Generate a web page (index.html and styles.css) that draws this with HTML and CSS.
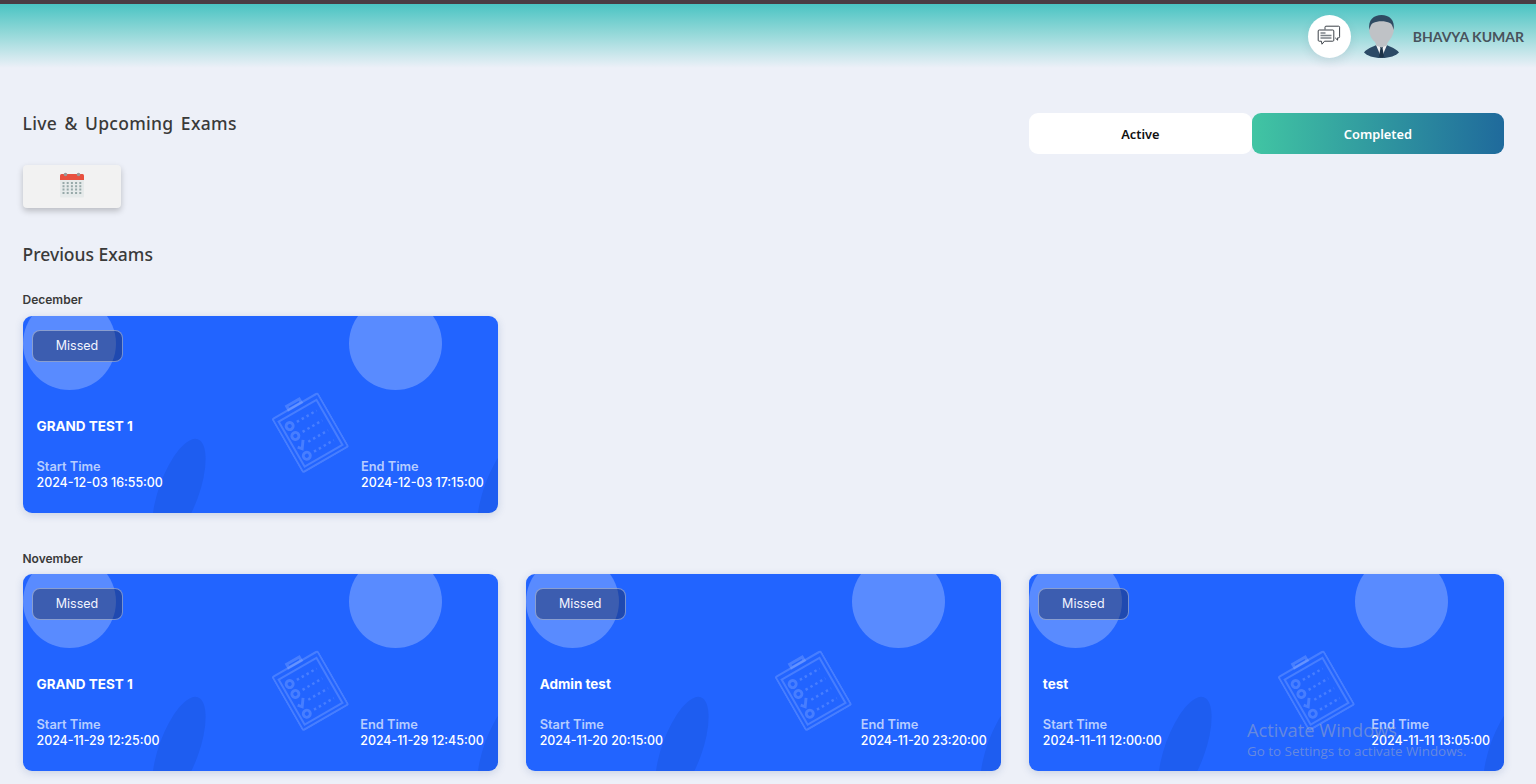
FILE: index.html
```html
<!DOCTYPE html>
<html lang="en">
<head>
<meta charset="utf-8">
<title>Exams</title>
<link rel="stylesheet" href="styles.css">
</head>
<body>
<svg class="sprite" width="0" height="0" aria-hidden="true">
  <symbol id="clipboard" viewBox="0 0 52 66">
    <g fill="none" stroke="currentColor" stroke-width="2">
      <rect x="1" y="6" width="50" height="59" rx="1.5"/>
      <rect x="5" y="11" width="42" height="50"/>
      <path d="M19 6V2h14v4z" stroke-width="2.800"/>
      <circle cx="12" cy="20" r="3.400" stroke-width="2.800"/>
      <circle cx="12" cy="31" r="3.400" stroke-width="2.800"/>
      <circle cx="12" cy="53" r="3.400" stroke-width="2.800"/>
      <path d="M8.500 41.500l3 3.500 5-7" stroke-width="2.800"/>
      <path d="M20 20h22M20 31h22M20 42h22M20 53h22" stroke-width="2.400" stroke-dasharray="2.400 3"/>
    </g>
  </symbol>
</svg>

<header class="topbar">
  <button class="chat-btn" type="button" aria-label="Messages">
    <svg width="24" height="22" viewBox="0 0 24 22" fill="none" stroke="#3b4148" stroke-width="1">
      <path d="M8 4.500V2.200q0-1 1-1h12.600q1 0 1 1v9.600q0 1-1 1h-1v2.400l-2.400-2.400"/>
      <path d="M2.200 5h13.600q1 0 1 1v9.200q0 1-1 1H7.500l-2.500 3-.6-3H2.200q-1 0-1-1V6q0-1 1-1z" fill="#fff"/>
      <path d="M3.500 8h5M3.500 10.500h11M3.500 13h11" stroke="#7d8389" stroke-width="1.300"/>
    </svg>
  </button>
  <svg class="avatar" width="37" height="43" viewBox="0 0 37 43">
    <path d="M1 37.500C4 33.500 9 32 13.500 30h10c4.500 2 9.500 3.500 12.500 7.500-3 3-9 5.500-17.500 5.500S4 40.500 1 37.500z" fill="#2c4a66"/>
    <path d="M13 30l5.500 13 5.500-13-3-2h-5z" fill="#eef0f2"/>
    <path d="M17 31h3l-.4 2.500 1.400 8-2.500 1.500-2.500-1.500 1.400-8z" fill="#1d3348"/>
    <path d="M6 13c0 7 3 11.500 5.500 13.500 1 .8 1.500 2.500 1.500 4l5.500 2 5.500-2c0-1.500.5-3.200 1.500-4C27 24.500 31 20 31 13 29 3 8 3 6 13z" fill="#bfc2c6"/>
    <path d="M6.500 15C4.500 5 11 0 18.500 0S32.500 5 30.500 15c-.5-3-1.500-6-3.500-7-5-2.200-12-2.200-17 0-2 1-3 4-3.500 7z" fill="#2f4a62"/>
  </svg>
  <span class="user-name">BHAVYA KUMAR</span>
</header>

<main class="page">
  <section class="overview">
    <h2 class="heading overview-title">Live &amp; Upcoming Exams</h2>
    <div class="tabs">
      <button class="tab tab-active" type="button">Active</button>
      <button class="tab tab-completed" type="button">Completed</button>
    </div>
  </section>

  <button class="calendar-btn" type="button" aria-label="Calendar">
    <svg width="26" height="26" viewBox="0 0 26 26">
      <rect x="1" y="2" width="24" height="23.500" rx="1.500" fill="#e6eaea"/>
      <path d="M1 8V3.500Q1 2 2.500 2h21Q25 2 25 3.500V8z" fill="#e8503f"/>
      <circle cx="6.500" cy="2.500" r="1.800" fill="#9a9a9a"/>
      <circle cx="19.500" cy="2.500" r="1.800" fill="#9a9a9a"/>
      <path d="M3.500 11h19M3.500 14.300h19M3.500 17.600h19M3.500 20.900h19" stroke="#96a8a8" stroke-width="2" stroke-dasharray="2 2.200"/>
    </svg>
  </button>

  <h2 class="heading previous-title">Previous Exams</h2>

  <h3 class="month">December</h3>
  <div class="exam-grid">
    <article class="card">
      <span class="bubble bubble-left"></span><span class="bubble bubble-right"></span>
      <span class="blob blob-left"></span><span class="blob blob-right"></span>
      <svg class="clip"><use href="#clipboard"/></svg>
      <span class="badge">Missed</span>
      <h4 class="card-title">GRAND TEST 1</h4>
      <div class="times">
        <div><p class="time-label">Start Time</p><p class="time-value">2024-12-03 16:55:00</p></div>
        <div><p class="time-label">End Time</p><p class="time-value">2024-12-03 17:15:00</p></div>
      </div>
    </article>
  </div>

  <h3 class="month month-next">November</h3>
  <div class="exam-grid">
    <article class="card">
      <span class="bubble bubble-left"></span><span class="bubble bubble-right"></span>
      <span class="blob blob-left"></span><span class="blob blob-right"></span>
      <svg class="clip"><use href="#clipboard"/></svg>
      <span class="badge">Missed</span>
      <h4 class="card-title">GRAND TEST 1</h4>
      <div class="times">
        <div><p class="time-label">Start Time</p><p class="time-value">2024-11-29 12:25:00</p></div>
        <div><p class="time-label">End Time</p><p class="time-value">2024-11-29 12:45:00</p></div>
      </div>
    </article>
    <article class="card">
      <span class="bubble bubble-left"></span><span class="bubble bubble-right"></span>
      <span class="blob blob-left"></span><span class="blob blob-right"></span>
      <svg class="clip"><use href="#clipboard"/></svg>
      <span class="badge">Missed</span>
      <h4 class="card-title">Admin test</h4>
      <div class="times">
        <div><p class="time-label">Start Time</p><p class="time-value">2024-11-20 20:15:00</p></div>
        <div><p class="time-label">End Time</p><p class="time-value">2024-11-20 23:20:00</p></div>
      </div>
    </article>
    <article class="card">
      <span class="bubble bubble-left"></span><span class="bubble bubble-right"></span>
      <span class="blob blob-left"></span><span class="blob blob-right"></span>
      <svg class="clip"><use href="#clipboard"/></svg>
      <span class="badge">Missed</span>
      <h4 class="card-title">test</h4>
      <div class="times">
        <div><p class="time-label">Start Time</p><p class="time-value">2024-11-11 12:00:00</p></div>
        <div><p class="time-label">End Time</p><p class="time-value">2024-11-11 13:05:00</p></div>
      </div>
    </article>
  </div>
</main>

<div class="watermark">
  <p class="watermark-title">Activate Windows</p>
  <p class="watermark-text">Go to Settings to activate Windows.</p>
</div>
</body>
</html>
```

FILE: styles.css
```css
* { box-sizing: border-box; }

html, body { margin: 0; padding: 0; }

body {
  position: relative;
  height: 784px;
  overflow: hidden;
  background: #edf0f8;
  font-family: "Inter", "Liberation Sans", sans-serif;
  color: #3a3a3a;
}

.sprite { position: absolute; }

p, h2, h3, h4 { margin: 0; }

button { font: inherit; border: 0; padding: 0; cursor: pointer; }

.topbar {
  display: flex;
  align-items: center;
  justify-content: flex-end;
  height: 68px;
  padding-right: 12px;
  border-top: 4px solid #4a3d44;
  background: linear-gradient(#4ac4c3 0%, #92d8d8 45%, #edf0f8 100%);
}

.chat-btn {
  display: flex;
  align-items: center;
  justify-content: center;
  width: 43px;
  height: 43px;
  border-radius: 50%;
  background: #fff;
  box-shadow: 0 4px 10px rgba(60, 90, 110, 0.12);
}

.avatar { margin-left: 12px; }

.user-name {
  margin-left: 13px;
  font-family: "Lato", sans-serif;
  font-size: 14px;
  font-weight: 700;
  color: #48535c;
}

.page { padding: 0 32px 12px 22.5px; }

.overview {
  display: grid;
  grid-template-columns: repeat(3, 1fr);
  gap: 28px;
  margin-top: 45px;
}

.heading {
  font-family: "Noto Sans", sans-serif;
  font-size: 17.500px;
  line-height: 21px;
  font-weight: 500;
  color: #3a3a3a;
}

.overview-title {
  grid-column: span 2;
  letter-spacing: 0.3px;
  word-spacing: 2.500px;
}

.tabs { display: flex; height: 41px; }

.tab {
  padding-top: 1px;
  font-family: "Noto Sans", sans-serif;
  font-size: 12.800px;
  font-weight: 600;
  border-radius: 9px;
}

.tab-active { width: 223px; background: #fff; color: #111; }

.tab-completed {
  flex: 1;
  background: linear-gradient(90deg, #41c5a3, #1f6a9c);
  color: #fff;
}

.calendar-btn {
  display: flex;
  align-items: center;
  justify-content: center;
  width: 98px;
  height: 43px;
  margin-top: 11px;
  padding-bottom: 4px;
  border-radius: 4px;
  background: #f2f2f2;
  box-shadow: 0 3px 6px rgba(0, 0, 0, 0.22);
}

.previous-title { margin-top: 36px; }

.month {
  margin-top: 27px;
  margin-bottom: 8px;
  font-family: "Inter", sans-serif;
  font-size: 12px;
  line-height: 16px;
  font-weight: 600;
  color: #3a3a3a;
}

.month-next { margin-top: 38px; margin-bottom: 7px; }

.exam-grid {
  display: grid;
  grid-template-columns: repeat(3, 1fr);
  gap: 28px;
}

.card {
  position: relative;
  display: flex;
  flex-direction: column;
  align-items: flex-start;
  height: 197px;
  padding: 14px 14px 0;
  overflow: hidden;
  border-radius: 9px;
  background: #2264ff;
  box-shadow: 0 2px 8px rgba(40, 70, 140, 0.18);
  color: #fff;
}

.bubble {
  position: absolute;
  top: -19px;
  width: 93px;
  height: 93px;
  border-radius: 50%;
  background: rgba(255, 255, 255, 0.25);
}

.bubble-left { left: 0; }
.bubble-right { left: 326px; }

.blob {
  position: absolute;
  top: 120px;
  width: 40px;
  height: 110px;
  border-radius: 50%;
  background: rgba(10, 50, 140, 0.13);
  transform: rotate(20deg);
}

.blob-left { left: 136px; }
.blob-right { left: 461px; }

.clip {
  position: absolute;
  top: 80px;
  left: 259px;
  width: 54px;
  height: 69px;
  color: rgba(255, 255, 255, 0.17);
  transform: rotate(-30deg);
}

.badge {
  position: relative;
  display: flex;
  align-items: center;
  justify-content: center;
  width: 91px;
  height: 32px;
  margin-left: -5px;
  padding-bottom: 1px;
  border: 1px solid rgba(255, 255, 255, 0.4);
  border-radius: 8px;
  background: rgba(27, 42, 87, 0.47);
  font-size: 12.500px;
  font-weight: 400;
  color: #f2f4ff;
}

.card-title {
  position: relative;
  margin-top: 55px;
  font-size: 13.500px;
  line-height: 18px;
  font-weight: 700;
}

.times {
  position: relative;
  display: flex;
  justify-content: space-between;
  width: 100%;
  margin-top: 24px;
}

.time-label {
  font-size: 12.800px;
  line-height: 16px;
  font-weight: 600;
  color: #b7cdff;
}

.time-value {
  font-size: 12.400px;
  line-height: 16px;
  font-weight: 500;
  color: #fff;
}

.watermark {
  position: absolute;
  top: 718px;
  left: 1247px;
  color: rgba(170, 175, 190, 0.5);
  font-family: "Open Sans", sans-serif;
  white-space: nowrap;
}

.watermark-title { font-size: 18.300px; line-height: 24px; }
.watermark-text { font-size: 13.400px; line-height: 18px; }
```
